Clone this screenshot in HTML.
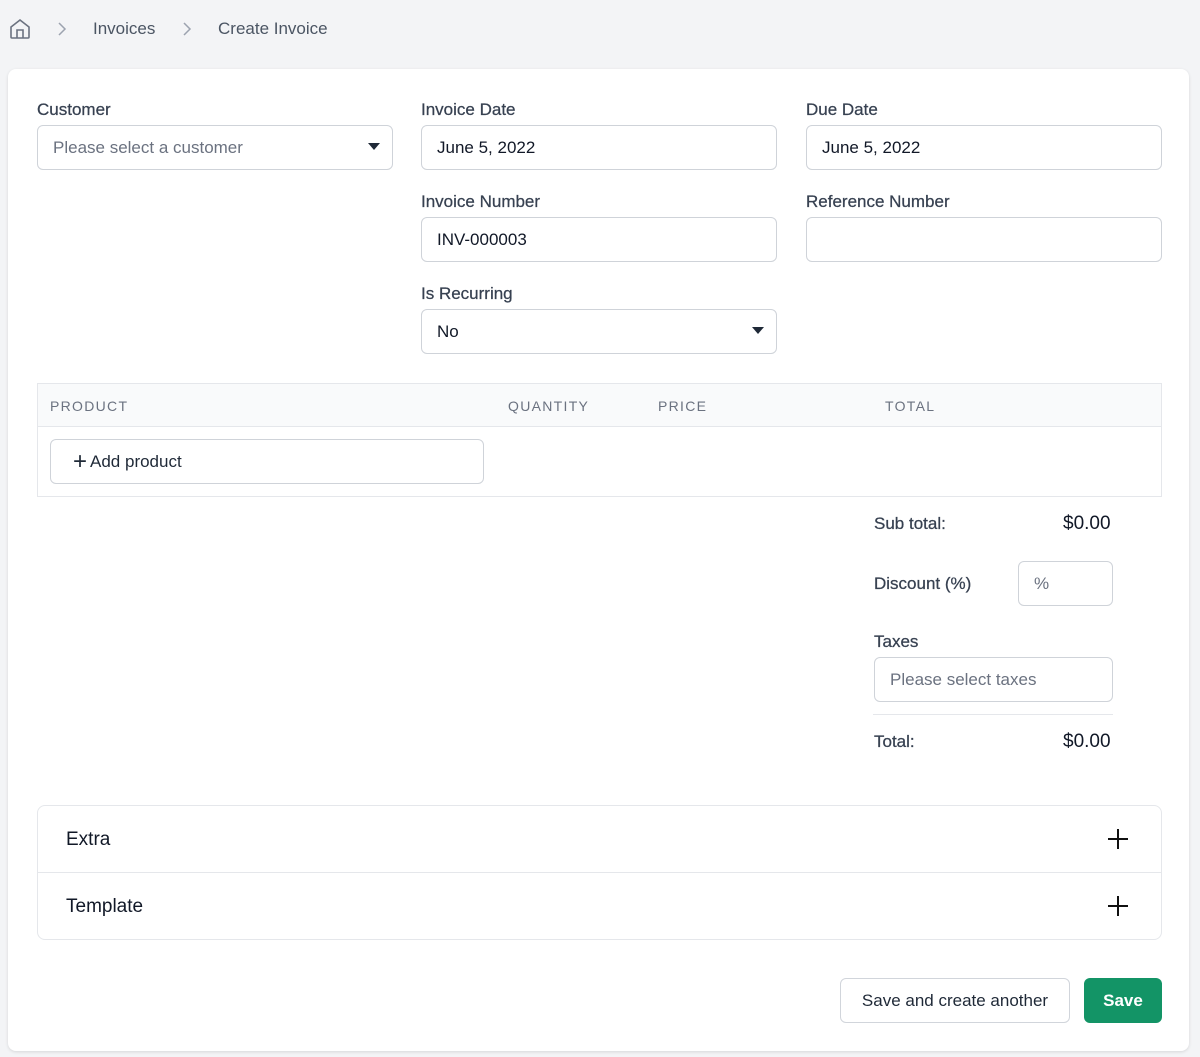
<!DOCTYPE html>
<html><head><meta charset="utf-8"><style>
*{box-sizing:border-box;margin:0;padding:0}
body{width:1200px;height:1057px;background:#f3f4f6;font-family:"Liberation Sans",sans-serif;position:relative;overflow:hidden;color:#111827}
.a{position:absolute}
.card{left:8px;top:69px;width:1181px;height:982px;background:#fff;border-radius:8px;box-shadow:0 1px 3px rgba(0,0,0,.12)}
.lbl{font-size:17px;color:#374151;font-weight:500;-webkit-text-stroke:0.25px #374151}
.inp{border:1px solid #cfd3d9;border-radius:6px;height:45px;background:#fff;font-size:17px;padding:0 15px;line-height:43px;color:#111827}
.ph{color:#6b7280}
.caret{position:absolute;right:12px;top:17px;width:0;height:0;border-left:6px solid transparent;border-right:6px solid transparent;border-top:7px solid #1f2937}
.th{font-size:14px;letter-spacing:1.3px;color:#6b7280;top:398px}
.bc{font-size:17px;color:#4b5563;top:19px}
</style></head><body>
<svg class="a" style="left:9px;top:18px" width="22" height="22" viewBox="0 0 22 22" fill="none" stroke="#6b7280" stroke-width="1.6"><path d="M2 9 L11 2 L20 9 V19 a1 1 0 0 1 -1 1 H3 a1 1 0 0 1 -1 -1 Z"/><path d="M8 20 V12 H14 V20"/></svg>
<svg class="a" style="left:57px;top:22px" width="10" height="14" fill="none" stroke="#9ca3af" stroke-width="1.5"><path d="M2 1 L8 7 L2 13"/></svg>
<div class="a bc" style="left:93px">Invoices</div>
<svg class="a" style="left:182px;top:22px" width="10" height="14" fill="none" stroke="#9ca3af" stroke-width="1.5"><path d="M2 1 L8 7 L2 13"/></svg>
<div class="a bc" style="left:218px">Create Invoice</div>
<div class="a card"></div>
<div class="a lbl" style="left:37px;top:100px">Customer</div>
<div class="a inp ph" style="left:37px;top:125px;width:356px">Please select a customer<span class="caret"></span></div>
<div class="a lbl" style="left:421px;top:100px">Invoice Date</div>
<div class="a inp" style="left:421px;top:125px;width:356px">June 5, 2022</div>
<div class="a lbl" style="left:806px;top:100px">Due Date</div>
<div class="a inp" style="left:806px;top:125px;width:356px">June 5, 2022</div>
<div class="a lbl" style="left:421px;top:192px">Invoice Number</div>
<div class="a inp" style="left:421px;top:217px;width:356px">INV-000003</div>
<div class="a lbl" style="left:806px;top:192px">Reference Number</div>
<div class="a inp" style="left:806px;top:217px;width:356px"></div>
<div class="a lbl" style="left:421px;top:284px">Is Recurring</div>
<div class="a inp" style="left:421px;top:309px;width:356px">No<span class="caret"></span></div>
<div class="a" style="left:37px;top:383px;width:1125px;height:114px;border:1px solid #e5e7eb"></div>
<div class="a" style="left:38px;top:384px;width:1123px;height:43px;background:#f9fafb;border-bottom:1px solid #e5e7eb"></div>
<div class="a th" style="left:50px">PRODUCT</div>
<div class="a th" style="left:508px">QUANTITY</div>
<div class="a th" style="left:658px">PRICE</div>
<div class="a th" style="left:885px">TOTAL</div>
<div class="a inp" style="left:50px;top:439px;width:434px;padding-left:22px;color:#1f2937;font-weight:500"><span style="font-size:24px;font-weight:300;vertical-align:-2px;margin-right:3px">+</span>Add product</div>
<div class="a lbl" style="left:874px;top:514px">Sub total:</div>
<div class="a" style="left:1063px;top:513px;font-size:19px">$0.00</div>
<div class="a lbl" style="left:874px;top:574px">Discount (%)</div>
<div class="a inp ph" style="left:1018px;top:561px;width:95px">%</div>
<div class="a lbl" style="left:874px;top:632px">Taxes</div>
<div class="a inp ph" style="left:874px;top:657px;width:239px">Please select taxes</div>
<div class="a" style="left:873px;top:714px;width:240px;border-top:1px solid #e5e7eb"></div>
<div class="a lbl" style="left:874px;top:732px">Total:</div>
<div class="a" style="left:1063px;top:731px;font-size:19px">$0.00</div>
<div class="a" style="left:37px;top:805px;width:1125px;height:135px;border:1px solid #e5e7eb;border-radius:8px"></div>
<div class="a" style="left:38px;top:872px;width:1123px;border-top:1px solid #e5e7eb"></div>
<div class="a" style="left:66px;top:829px;font-size:19px">Extra</div>
<div class="a" style="left:66px;top:896px;font-size:19px">Template</div>
<svg class="a" style="left:1107px;top:828px" width="22" height="22"><path d="M11 1V21M1 11H21" stroke="#111" stroke-width="2"/></svg>
<svg class="a" style="left:1107px;top:895px" width="22" height="22"><path d="M11 1V21M1 11H21" stroke="#111" stroke-width="2"/></svg>
<div class="a" style="left:840px;top:978px;width:230px;height:45px;border:1px solid #d1d5db;border-radius:6px;font-size:17px;color:#1f2937;font-weight:500;text-align:center;line-height:43px">Save and create another</div>
<div class="a" style="left:1084px;top:978px;width:78px;height:45px;background:#139466;border-radius:6px;font-size:17px;color:#fff;font-weight:bold;text-align:center;line-height:45px">Save</div>
</body></html>
